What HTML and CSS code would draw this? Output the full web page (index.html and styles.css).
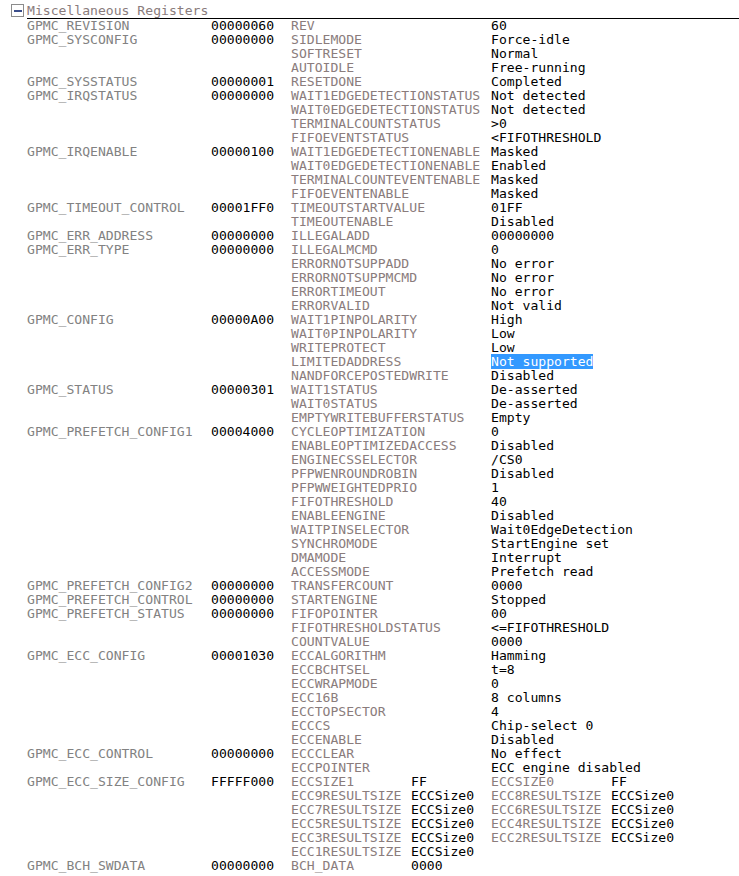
FILE: index.html
```html
<!DOCTYPE html>
<html>
<head>
<meta charset="utf-8">
<link rel="stylesheet" href="styles.css">
</head>
<body>
<div class="panel">
  <div class="head">
    <span class="toggle"><span class="minus"></span></span>
    <span class="title">Miscellaneous Registers</span>
  </div>
  <div class="rows">
    <div class="r"><span class="n">GPMC_REVISION</span><span class="h">00000060</span><span class="f">REV</span><span class="v">60</span></div>
    <div class="r"><span class="n">GPMC_SYSCONFIG</span><span class="h">00000000</span><span class="f">SIDLEMODE</span><span class="v">Force-idle</span></div>
    <div class="r"><span class="f">SOFTRESET</span><span class="v">Normal</span></div>
    <div class="r"><span class="f">AUTOIDLE</span><span class="v">Free-running</span></div>
    <div class="r"><span class="n">GPMC_SYSSTATUS</span><span class="h">00000001</span><span class="f">RESETDONE</span><span class="v">Completed</span></div>
    <div class="r"><span class="n">GPMC_IRQSTATUS</span><span class="h">00000000</span><span class="f">WAIT1EDGEDETECTIONSTATUS</span><span class="v">Not detected</span></div>
    <div class="r"><span class="f">WAIT0EDGEDETECTIONSTATUS</span><span class="v">Not detected</span></div>
    <div class="r"><span class="f">TERMINALCOUNTSTATUS</span><span class="v">&gt;0</span></div>
    <div class="r"><span class="f">FIFOEVENTSTATUS</span><span class="v">&lt;FIFOTHRESHOLD</span></div>
    <div class="r"><span class="n">GPMC_IRQENABLE</span><span class="h">00000100</span><span class="f">WAIT1EDGEDETECTIONENABLE</span><span class="v">Masked</span></div>
    <div class="r"><span class="f">WAIT0EDGEDETECTIONENABLE</span><span class="v">Enabled</span></div>
    <div class="r"><span class="f">TERMINALCOUNTEVENTENABLE</span><span class="v">Masked</span></div>
    <div class="r"><span class="f">FIFOEVENTENABLE</span><span class="v">Masked</span></div>
    <div class="r"><span class="n">GPMC_TIMEOUT_CONTROL</span><span class="h">00001FF0</span><span class="f">TIMEOUTSTARTVALUE</span><span class="v">01FF</span></div>
    <div class="r"><span class="f">TIMEOUTENABLE</span><span class="v">Disabled</span></div>
    <div class="r"><span class="n">GPMC_ERR_ADDRESS</span><span class="h">00000000</span><span class="f">ILLEGALADD</span><span class="v">00000000</span></div>
    <div class="r"><span class="n">GPMC_ERR_TYPE</span><span class="h">00000000</span><span class="f">ILLEGALMCMD</span><span class="v">0</span></div>
    <div class="r"><span class="f">ERRORNOTSUPPADD</span><span class="v">No error</span></div>
    <div class="r"><span class="f">ERRORNOTSUPPMCMD</span><span class="v">No error</span></div>
    <div class="r"><span class="f">ERRORTIMEOUT</span><span class="v">No error</span></div>
    <div class="r"><span class="f">ERRORVALID</span><span class="v">Not valid</span></div>
    <div class="r"><span class="n">GPMC_CONFIG</span><span class="h">00000A00</span><span class="f">WAIT1PINPOLARITY</span><span class="v">High</span></div>
    <div class="r"><span class="f">WAIT0PINPOLARITY</span><span class="v">Low</span></div>
    <div class="r"><span class="f">WRITEPROTECT</span><span class="v">Low</span></div>
    <div class="r"><span class="f">LIMITEDADDRESS</span><span class="v"><span class="sel">Not supported</span></span></div>
    <div class="r"><span class="f">NANDFORCEPOSTEDWRITE</span><span class="v">Disabled</span></div>
    <div class="r"><span class="n">GPMC_STATUS</span><span class="h">00000301</span><span class="f">WAIT1STATUS</span><span class="v">De-asserted</span></div>
    <div class="r"><span class="f">WAIT0STATUS</span><span class="v">De-asserted</span></div>
    <div class="r"><span class="f">EMPTYWRITEBUFFERSTATUS</span><span class="v">Empty</span></div>
    <div class="r"><span class="n">GPMC_PREFETCH_CONFIG1</span><span class="h">00004000</span><span class="f">CYCLEOPTIMIZATION</span><span class="v">0</span></div>
    <div class="r"><span class="f">ENABLEOPTIMIZEDACCESS</span><span class="v">Disabled</span></div>
    <div class="r"><span class="f">ENGINECSSELECTOR</span><span class="v">/CS0</span></div>
    <div class="r"><span class="f">PFPWENROUNDROBIN</span><span class="v">Disabled</span></div>
    <div class="r"><span class="f">PFPWWEIGHTEDPRIO</span><span class="v">1</span></div>
    <div class="r"><span class="f">FIFOTHRESHOLD</span><span class="v">40</span></div>
    <div class="r"><span class="f">ENABLEENGINE</span><span class="v">Disabled</span></div>
    <div class="r"><span class="f">WAITPINSELECTOR</span><span class="v">Wait0EdgeDetection</span></div>
    <div class="r"><span class="f">SYNCHROMODE</span><span class="v">StartEngine set</span></div>
    <div class="r"><span class="f">DMAMODE</span><span class="v">Interrupt</span></div>
    <div class="r"><span class="f">ACCESSMODE</span><span class="v">Prefetch read</span></div>
    <div class="r"><span class="n">GPMC_PREFETCH_CONFIG2</span><span class="h">00000000</span><span class="f">TRANSFERCOUNT</span><span class="v">0000</span></div>
    <div class="r"><span class="n">GPMC_PREFETCH_CONTROL</span><span class="h">00000000</span><span class="f">STARTENGINE</span><span class="v">Stopped</span></div>
    <div class="r"><span class="n">GPMC_PREFETCH_STATUS</span><span class="h">00000000</span><span class="f">FIFOPOINTER</span><span class="v">00</span></div>
    <div class="r"><span class="f">FIFOTHRESHOLDSTATUS</span><span class="v">&lt;=FIFOTHRESHOLD</span></div>
    <div class="r"><span class="f">COUNTVALUE</span><span class="v">0000</span></div>
    <div class="r"><span class="n">GPMC_ECC_CONFIG</span><span class="h">00001030</span><span class="f">ECCALGORITHM</span><span class="v">Hamming</span></div>
    <div class="r"><span class="f">ECCBCHTSEL</span><span class="v">t=8</span></div>
    <div class="r"><span class="f">ECCWRAPMODE</span><span class="v">0</span></div>
    <div class="r"><span class="f">ECC16B</span><span class="v">8 columns</span></div>
    <div class="r"><span class="f">ECCTOPSECTOR</span><span class="v">4</span></div>
    <div class="r"><span class="f">ECCCS</span><span class="v">Chip-select 0</span></div>
    <div class="r"><span class="f">ECCENABLE</span><span class="v">Disabled</span></div>
    <div class="r"><span class="n">GPMC_ECC_CONTROL</span><span class="h">00000000</span><span class="f">ECCCLEAR</span><span class="v">No effect</span></div>
    <div class="r"><span class="f">ECCPOINTER</span><span class="v">ECC engine disabled</span></div>
    <div class="r"><span class="n">GPMC_ECC_SIZE_CONFIG</span><span class="h">FFFFF000</span><span class="f1">ECCSIZE1</span><span class="v1">FF</span><span class="f2">ECCSIZE0</span><span class="v2">FF</span></div>
    <div class="r"><span class="f1">ECC9RESULTSIZE</span><span class="v1">ECCSize0</span><span class="f2">ECC8RESULTSIZE</span><span class="v2">ECCSize0</span></div>
    <div class="r"><span class="f1">ECC7RESULTSIZE</span><span class="v1">ECCSize0</span><span class="f2">ECC6RESULTSIZE</span><span class="v2">ECCSize0</span></div>
    <div class="r"><span class="f1">ECC5RESULTSIZE</span><span class="v1">ECCSize0</span><span class="f2">ECC4RESULTSIZE</span><span class="v2">ECCSize0</span></div>
    <div class="r"><span class="f1">ECC3RESULTSIZE</span><span class="v1">ECCSize0</span><span class="f2">ECC2RESULTSIZE</span><span class="v2">ECCSize0</span></div>
    <div class="r"><span class="f1">ECC1RESULTSIZE</span><span class="v1">ECCSize0</span></div>
    <div class="r"><span class="n">GPMC_BCH_SWDATA</span><span class="h">00000000</span><span class="f1">BCH_DATA</span><span class="v1">0000</span></div>
  </div>
</div>
</body>
</html>
```

FILE: styles.css
```css
html, body {
  margin: 0;
  padding: 0;
  background: #ffffff;
}
body {
  font-family: "DejaVu Sans Mono", "Liberation Mono", monospace;
  font-size: 13.1px;
  line-height: 14px;
  color: #000000;
}
.panel {
  width: 739px;
}
.head {
  display: flex;
  align-items: flex-start;
  height: 19px;
}
.toggle {
  box-sizing: border-box;
  width: 13px;
  height: 13px;
  margin: 4px 3px 0 11px;
  border: 1px solid #8c8c8c;
  background: #ffffff;
  display: flex;
  align-items: center;
  justify-content: center;
}
.minus {
  width: 8px;
  height: 2px;
  background: #3c4f8c;
}
.title {
  flex: 1;
  color: #8a7c7c;
  padding-top: 4px;
  height: 14px;
  border-bottom: 1px solid #000000;
  line-height: 14px;
}
.rows {
  padding-left: 27px;
}
.r {
  display: grid;
  grid-template-columns: 184px 80px 120px 80px 120px 1fr;
  height: 14px;
  white-space: nowrap;
}
.n {
  grid-column: 1;
  color: #828282;
}
.h {
  grid-column: 2;
}
.f {
  grid-column: 3 / 5;
  color: #8a7c7c;
}
.v {
  grid-column: 5 / 7;
}
.f1 {
  grid-column: 3;
  color: #8a7c7c;
}
.v1 {
  grid-column: 4;
}
.f2 {
  grid-column: 5;
  color: #8a7c7c;
}
.v2 {
  grid-column: 6;
}
.sel {
  background: #3399ff;
  color: #ffffff;
}
```
